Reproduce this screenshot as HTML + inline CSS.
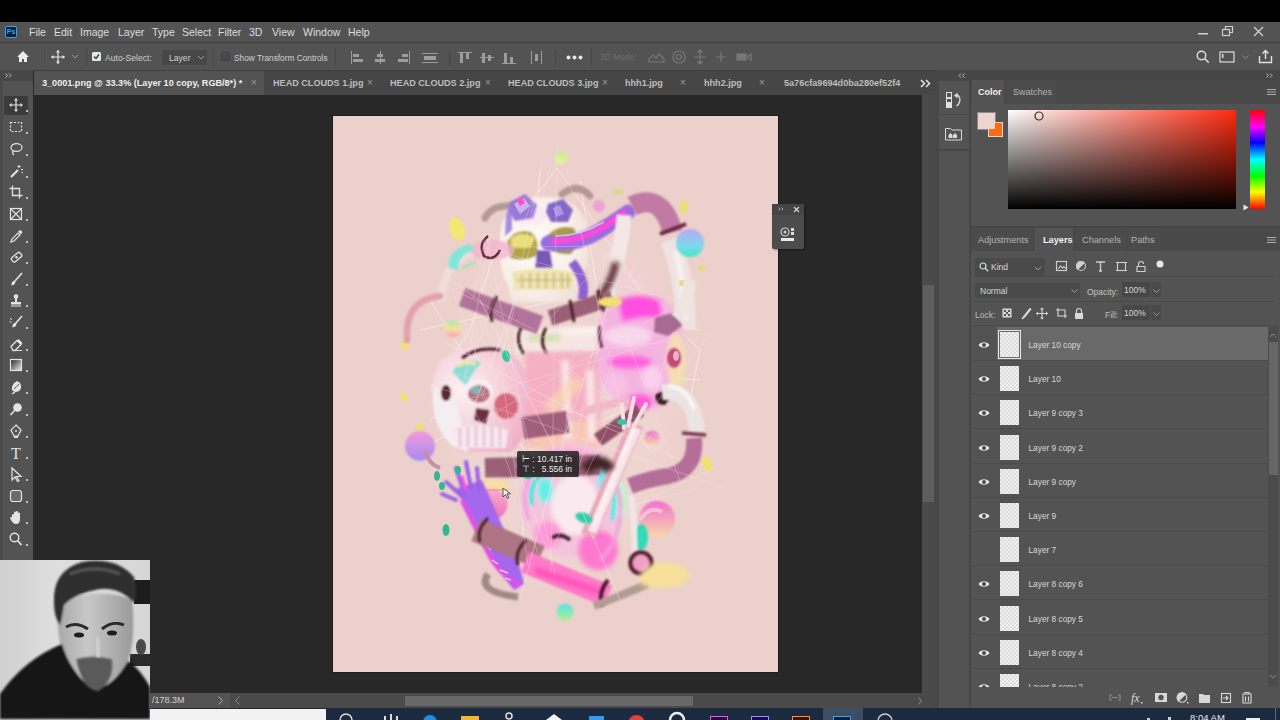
<!DOCTYPE html>
<html><head><meta charset="utf-8">
<style>
*{margin:0;padding:0;box-sizing:border-box}
html,body{width:1280px;height:720px;overflow:hidden;background:#282828;font-family:"Liberation Sans",sans-serif;color:#d8d8d8}
.a{position:absolute}
svg{position:absolute;overflow:visible}
#top{left:0;top:0;width:1280px;height:22px;background:#000}
#menu{left:0;top:22px;width:1280px;height:20px;background:#535353;font-size:10.5px}
#menu span{position:absolute;top:4px;color:#dedede}
#opts{left:0;top:43px;width:1280px;height:27px;background:#535353;font-size:9px;color:#d0d0d0}
#opts .sep{position:absolute;top:5px;width:1px;height:18px;background:#464646}
#tabs{left:34px;top:71px;width:904px;height:24px;background:#464646;font-size:9.1px}
#tabs span{position:absolute;top:7px;color:#bdbdbd;white-space:nowrap;font-weight:bold}
#tabs i{position:absolute;top:6px;font-style:normal;color:#9a9a9a;font-size:10px}
#tool{left:0;top:70px;width:33px;height:638px;background:#535353}
#canvasbg{left:34px;top:95px;width:888px;height:598px;background:#282828}
#art{left:333px;top:116px;width:445px;height:556px;background:#ecd0cb;overflow:hidden;box-shadow:0 0 0 1px #1c1c1c}
#vscroll{left:922px;top:95px;width:14px;height:598px;background:#4a4a4a}
#hscroll{left:34px;top:693px;width:902px;height:15px;background:#535353}
#narrow{left:936px;top:70px;width:34px;height:638px;background:#474747}
#right{left:970px;top:70px;width:310px;height:638px;background:#535353}
#taskbar{left:0;top:708px;width:1280px;height:12px;background:#1c2a40}
#cam{left:0;top:560px;width:150px;height:160px;background:#222;overflow:hidden}
.lay{position:absolute;left:2px;width:296px;height:34px;border-bottom:1px solid #4c4c4c}
.lay .eye{position:absolute;left:6px;top:14px}
.lay .th{position:absolute;left:28px;top:5px;width:19px;height:25px;background-color:#f0f0f0;background-image:linear-gradient(45deg,#dcdcdc 25%,transparent 25%,transparent 75%,#dcdcdc 75%),linear-gradient(45deg,#dcdcdc 25%,transparent 25%,transparent 75%,#dcdcdc 75%);background-size:4px 4px;background-position:0 0,2px 2px}
.lay .nm{position:absolute;left:56.5px;top:13px;font-size:8.3px;color:#d8d8d8;white-space:nowrap}
.lay .vl{position:absolute;left:25px;top:0;width:1px;height:34px;background:#4a4a4a}
</style></head><body>
<div class="a" id="top"></div>
<div class="a" id="menu">
 <div class="a" style="left:5px;top:4px;width:12px;height:12px;background:#001e36;border:1px solid #2fa3f5;border-radius:2px;font-size:7px;font-weight:bold;color:#31a8ff;line-height:10px;text-align:center">Ps</div>
 <span style="left:29px">File</span><span style="left:54px">Edit</span><span style="left:80px">Image</span><span style="left:118px">Layer</span><span style="left:152px">Type</span><span style="left:182px">Select</span><span style="left:218px">Filter</span><span style="left:249px">3D</span><span style="left:272px">View</span><span style="left:303px">Window</span><span style="left:348px">Help</span>
 <svg style="left:1197px;top:6px" width="12" height="10"><rect x="1" y="5" width="10" height="1.5" fill="#cfcfcf"/></svg>
 <svg style="left:1221px;top:3px" width="14" height="12"><rect x="1.5" y="4.5" width="7" height="6" fill="none" stroke="#cfcfcf" stroke-width="1.2"/><path d="M4.5 4.5V1.5h7v6h-3" fill="none" stroke="#cfcfcf" stroke-width="1.2"/></svg>
 <svg style="left:1253px;top:4px" width="11" height="11"><path d="M1 1L10 10M10 1L1 10" stroke="#d0d0d0" stroke-width="1.3"/></svg>
</div>
<div class="a" style="left:0;top:42px;width:1280px;height:1px;background:#3e3e3e"></div>
<div class="a" id="opts">
 <svg style="left:16px;top:7px" width="14" height="13"><path d="M7 1L1 7h2v5h3V9h2v3h3V7h2z" fill="#ededed"/></svg>
 <div class="sep" style="left:44px;background:#4c4c4c"></div>
 <svg style="left:51px;top:7px" width="14" height="14"><path d="M7 0.5v13M0.5 7h13" stroke="#e6e6e6" stroke-width="1.2"/><path d="M7 0L5 2.5h4zM7 14L5 11.5h4zM0 7l2.5-2v4zM14 7l-2.5-2v4z" fill="#e6e6e6"/></svg>
 <svg style="left:71px;top:11px" width="8" height="5"><path d="M1 1l3 3 3-3" stroke="#9a9a9a" fill="none"/></svg>
 <div class="sep" style="left:86px"></div>
 <svg style="left:92px;top:9px" width="9" height="9"><rect x="0" y="0" width="9" height="9" rx="1.5" fill="#e8e8e8"/><path d="M2 4.5l2 2 3-4" stroke="#3a3a3a" stroke-width="1.4" fill="none"/></svg>
 <span class="a" style="left:105px;top:10px;font-size:8.6px">Auto-Select:</span>
 <div class="a" style="left:162px;top:7px;width:45px;height:15px;background:#474747"></div>
 <span class="a" style="left:169px;top:10px;font-size:8.6px">Layer</span>
 <svg style="left:197px;top:12px" width="8" height="5"><path d="M1 1l3 3 3-3" stroke="#9a9a9a" fill="none"/></svg>
 <div class="sep" style="left:213px"></div>
 <svg style="left:221px;top:9px" width="9" height="9"><rect x="0.5" y="0.5" width="8" height="8" rx="1.5" fill="#4a4a4a" stroke="#3e3e3e"/></svg>
 <span class="a" style="left:234px;top:10px;font-size:8.3px">Show Transform Controls</span>
 <div class="sep" style="left:335px"></div>
 <g></g>
 <svg style="left:350px;top:8px" width="260" height="14" fill="#9c9c9c">
  <rect x="1" y="0" width="1" height="13"/><rect x="3" y="3" width="6" height="3"/><rect x="3" y="8" width="10" height="3"/>
  <rect x="30" y="0" width="1" height="13"/><rect x="27" y="3" width="6" height="3"/><rect x="25" y="8" width="10" height="3"/>
  <rect x="59" y="0" width="1" height="13"/><rect x="52" y="3" width="6" height="3"/><rect x="48" y="8" width="10" height="3"/>
  <rect x="72" y="2" width="16" height="1"/><rect x="74" y="5" width="12" height="4"/><rect x="72" y="11" width="16" height="1"/>
  <rect x="99" y="-1" width="1" height="16" fill="#444"/>
  <rect x="108" y="1" width="14" height="1"/><rect x="110" y="2" width="3" height="10"/><rect x="116" y="2" width="3" height="6"/>
  <rect x="130" y="6" width="14" height="1"/><rect x="132" y="2" width="3" height="10"/><rect x="138" y="4" width="3" height="6"/>
  <rect x="152" y="12" width="14" height="1"/><rect x="154" y="2" width="3" height="10"/><rect x="160" y="6" width="3" height="6"/>
  <rect x="181" y="0" width="1" height="13"/><rect x="191" y="0" width="1" height="13"/><rect x="185" y="3" width="3" height="7"/>
  <rect x="205" y="-1" width="1" height="16" fill="#444"/>
 </svg>
 <svg style="left:566px;top:12px" width="18" height="5"><circle cx="2.5" cy="2.5" r="2" fill="#e6e6e6"/><circle cx="8.5" cy="2.5" r="2" fill="#e6e6e6"/><circle cx="14.5" cy="2.5" r="2" fill="#e6e6e6"/></svg>
 <div class="sep" style="left:591px"></div>
 <span class="a" style="left:600px;top:9px;color:#6e6e6e;font-size:8.5px">3D Mode:</span>
 <svg style="left:647px;top:6px" width="110" height="16" fill="none" stroke="#777" stroke-width="1.2">
  <path d="M2 10l4-4 3 3 3-4 5 5v3H2z"/><circle cx="32" cy="8" r="6"/><circle cx="32" cy="8" r="2.5"/>
  <path d="M53 2v12M47 8h12M53 1l-2 2h4zM53 15l-2-2h4z"/><path d="M74 3v10M69 8h10"/><rect x="90" y="5" width="9" height="6" fill="#777"/><path d="M100 8l4-3v6z"/>
 </svg>
 <svg style="left:1196px;top:7px" width="14" height="14"><circle cx="5.5" cy="5.5" r="4.3" fill="none" stroke="#e0e0e0" stroke-width="1.4"/><path d="M8.8 8.8l4 4" stroke="#e0e0e0" stroke-width="1.6"/></svg>
 <svg style="left:1219px;top:8px" width="16" height="12"><rect x="1" y="1" width="14" height="10" fill="none" stroke="#dcdcdc" stroke-width="1.2"/><rect x="3" y="3" width="1.5" height="4" fill="#dcdcdc"/></svg>
 <svg style="left:1242px;top:12px" width="7" height="4"><path d="M0.5 0.5l3 3 3-3" stroke="#8c8c8c" fill="none"/></svg>
 <svg style="left:1258px;top:6px" width="15" height="15"><path d="M1.5 7v6.5h12V7" fill="none" stroke="#e0e0e0" stroke-width="1.4"/><path d="M7.5 10V2M4.5 4.5l3-3 3 3" fill="none" stroke="#e0e0e0" stroke-width="1.4"/></svg>
</div>
<div class="a" style="left:0;top:70px;width:1280px;height:1px;background:#3e3e3e"></div>
<div class="a" id="canvasbg"></div>
<div class="a" id="tabs">
 <div class="a" style="left:0;top:0;width:230px;height:24px;background:#535353"></div>
 <span style="left:8px;color:#efefef">3_0001.png @ 33.3% (Layer 10 copy, RGB/8*) *</span><i style="left:217px">×</i>
 <span style="left:239px">HEAD CLOUDS 1.jpg</span><i style="left:333px">×</i>
 <span style="left:356px">HEAD CLOUDS 2.jpg</span><i style="left:451px">×</i>
 <span style="left:474px">HEAD CLOUDS 3.jpg</span><i style="left:568px">×</i>
 <span style="left:591px">hhh1.jpg</span><i style="left:646px">×</i>
 <span style="left:670px">hhh2.jpg</span><i style="left:725px">×</i>
 <span style="left:750px">5a76cfa9694d0ba280ef52f4</span>
 <svg style="left:886px;top:8px" width="12" height="9"><path d="M1 1l3.5 3.5L1 8M6 1l3.5 3.5L6 8" stroke="#e6e6e6" stroke-width="1.5" fill="none"/></svg>
</div>
<div class="a" id="tool">
 <div class="a" style="left:0;top:0;width:33px;height:11px;background:#474747"></div>
 <svg style="left:5px;top:3px" width="8" height="5"><path d="M0.5 0.5l2 2-2 2M4 0.5l2 2-2 2" stroke="#bbb" fill="none"/></svg>
 <div class="a" style="left:0;top:11px;width:3px;height:627px;background:#4a4a4a"></div>
 <div class="a" style="left:4px;top:26px;width:24px;height:19px;background:#3b3b3b"></div>
 <svg style="left:9px;top:28px" width="15" height="15"><path d="M7 1v12M1 7h12" stroke="#e4e4e4" stroke-width="1.2"/><path d="M7 0L5 2.5h4zM7 14L5 11.5h4zM0 7l2.5-2v4zM14 7l-2.5-2v4z" fill="#e4e4e4"/></svg>
 <div class="a" style="left:26px;top:40px;width:2px;height:2px;background:#bdbdbd"></div>
 <svg style="left:9px;top:50px" width="15" height="15"><rect x="1.5" y="2.5" width="11" height="9" fill="none" stroke="#e4e4e4" stroke-width="1.2" stroke-dasharray="2 1.5"/></svg>
 <div class="a" style="left:26px;top:62px;width:2px;height:2px;background:#bdbdbd"></div>
 <svg style="left:9px;top:72px" width="15" height="15"><ellipse cx="7.5" cy="5.5" rx="5.5" ry="3.8" fill="none" stroke="#e4e4e4" stroke-width="1.2"/><path d="M4 8.5Q3 12 5 13" fill="none" stroke="#e4e4e4" stroke-width="1.2"/></svg>
 <div class="a" style="left:26px;top:84px;width:2px;height:2px;background:#bdbdbd"></div>
 <svg style="left:9px;top:94px" width="15" height="15"><path d="M2 13L9 6" stroke="#e4e4e4" stroke-width="2.2"/><path d="M10 1v3M8.5 2.5h3M12 5.5h2M12.5 8l1.5 1" stroke="#e4e4e4" stroke-width="1"/></svg>
 <div class="a" style="left:26px;top:106px;width:2px;height:2px;background:#bdbdbd"></div>
 <svg style="left:9px;top:115px" width="15" height="15"><path d="M3.5 0.5v10h10M0.5 3.5h10v10" fill="none" stroke="#e4e4e4" stroke-width="1.3"/></svg>
 <div class="a" style="left:26px;top:127px;width:2px;height:2px;background:#bdbdbd"></div>
 <svg style="left:9px;top:137px" width="15" height="15"><rect x="1.5" y="1.5" width="11" height="11" fill="none" stroke="#e4e4e4" stroke-width="1.2"/><path d="M1.5 1.5l11 11M12.5 1.5l-11 11" stroke="#e4e4e4" stroke-width="1.1"/></svg>
 <div class="a" style="left:26px;top:149px;width:2px;height:2px;background:#bdbdbd"></div>
 <svg style="left:9px;top:159px" width="15" height="15"><path d="M2 13l1-3 6-6 2 2-6 6z" fill="none" stroke="#e4e4e4" stroke-width="1.2"/><path d="M9 2.5l2.5-1.5 2 2L12 5.5z" fill="#e4e4e4"/></svg>
 <div class="a" style="left:26px;top:171px;width:2px;height:2px;background:#bdbdbd"></div>
 <svg style="left:9px;top:180px" width="15" height="15"><rect x="2" y="4.5" width="11" height="5.5" rx="2" transform="rotate(-40 7.5 7.2)" fill="none" stroke="#e4e4e4" stroke-width="1.3"/><circle cx="7.5" cy="7.2" r="1.2" fill="#e4e4e4"/></svg>
 <div class="a" style="left:26px;top:192px;width:2px;height:2px;background:#bdbdbd"></div>
 <svg style="left:9px;top:202px" width="15" height="15"><path d="M13 1L6 9" stroke="#e4e4e4" stroke-width="1.6"/><path d="M6 8.5Q2 9 2.5 13.5Q6 13 6.5 10z" fill="#e4e4e4"/></svg>
 <div class="a" style="left:26px;top:214px;width:2px;height:2px;background:#bdbdbd"></div>
 <svg style="left:9px;top:223px" width="15" height="15"><circle cx="7" cy="3.5" r="2.3" fill="#e4e4e4"/><rect x="6" y="5" width="2" height="4" fill="#e4e4e4"/><rect x="2" y="9" width="10" height="2.5" fill="#e4e4e4"/><rect x="2" y="12.5" width="10" height="1" fill="#e4e4e4"/></svg>
 <div class="a" style="left:26px;top:235px;width:2px;height:2px;background:#bdbdbd"></div>
 <svg style="left:9px;top:245px" width="15" height="15"><path d="M13 1L7 8" stroke="#e4e4e4" stroke-width="1.6"/><path d="M7 7.5Q3 8 3.5 12.5Q7 12 7.5 9z" fill="#e4e4e4"/><path d="M1 3l2 2M0.5 7h2" stroke="#e4e4e4" stroke-width="1"/></svg>
 <div class="a" style="left:26px;top:257px;width:2px;height:2px;background:#bdbdbd"></div>
 <svg style="left:9px;top:267px" width="15" height="15"><path d="M2 9.5l6-6 4 4-6 6H4z" fill="none" stroke="#e4e4e4" stroke-width="1.3"/><path d="M8 3.5l4 4 1.5-1.5-4-4z" fill="#e4e4e4"/><path d="M6 13.5h7" stroke="#e4e4e4"/></svg>
 <div class="a" style="left:26px;top:279px;width:2px;height:2px;background:#bdbdbd"></div>
 <svg style="left:9px;top:288px" width="15" height="15"><defs><linearGradient id="tg" x1="0" y1="0" x2="1" y2="1"><stop offset="0" stop-color="#222"/><stop offset="1" stop-color="#eee"/></linearGradient></defs><rect x="1.5" y="1.5" width="11" height="11" fill="url(#tg)" stroke="#e4e4e4" stroke-width="1.2"/></svg>
 <div class="a" style="left:26px;top:300px;width:2px;height:2px;background:#bdbdbd"></div>
 <svg style="left:9px;top:310px" width="15" height="15"><path d="M8 1Q13 3 12 8Q11 12 6 12Q2 11 3 7Q4 3 8 1z" fill="#e4e4e4"/><path d="M6 12L3 14" stroke="#e4e4e4" stroke-width="1.3"/><path d="M5 9Q8 6 10 4" stroke="#535353" stroke-width="1"/></svg>
 <div class="a" style="left:26px;top:322px;width:2px;height:2px;background:#bdbdbd"></div>
 <svg style="left:9px;top:332px" width="15" height="15"><circle cx="8.5" cy="5.5" r="4.3" fill="#e4e4e4"/><path d="M5.5 8.5L1.5 13" stroke="#e4e4e4" stroke-width="1.6"/></svg>
 <div class="a" style="left:26px;top:344px;width:2px;height:2px;background:#bdbdbd"></div>
 <svg style="left:9px;top:354px" width="15" height="15"><path d="M7 1l5 5-3 6H5L2 6z" fill="none" stroke="#e4e4e4" stroke-width="1.2"/><circle cx="7" cy="7" r="1" fill="#e4e4e4"/><path d="M5 12h4v2H5z" fill="#e4e4e4"/></svg>
 <div class="a" style="left:26px;top:366px;width:2px;height:2px;background:#bdbdbd"></div>
 <svg style="left:9px;top:375px" width="15" height="15"><text x="7" y="13.5" text-anchor="middle" font-family="Liberation Serif" font-size="16" fill="#e4e4e4">T</text></svg>
 <div class="a" style="left:26px;top:387px;width:2px;height:2px;background:#bdbdbd"></div>
 <svg style="left:9px;top:397px" width="15" height="15"><path d="M3 1v12l3-3 2.5 4.5 1.5-0.8L7.5 9.5H12z" fill="none" stroke="#e4e4e4" stroke-width="1.2"/></svg>
 <div class="a" style="left:26px;top:409px;width:2px;height:2px;background:#bdbdbd"></div>
 <svg style="left:9px;top:419px" width="15" height="15"><rect x="1.5" y="1.5" width="11" height="11" rx="2.5" fill="#6a6a6a" stroke="#e4e4e4" stroke-width="1.2"/></svg>
 <div class="a" style="left:26px;top:431px;width:2px;height:2px;background:#bdbdbd"></div>
 <svg style="left:9px;top:440px" width="15" height="15"><path d="M3 8V5a1 1 0 0 1 2 0v2V2.5a1 1 0 0 1 2 0V7V2a1 1 0 0 1 2 0v5V3.5a1 1 0 0 1 2 0V9Q11 14 7 14Q4 14 2 10L1 8a1 1 0 0 1 2 0z" fill="#e4e4e4"/></svg>
 <div class="a" style="left:26px;top:452px;width:2px;height:2px;background:#bdbdbd"></div>
 <svg style="left:9px;top:462px" width="15" height="15"><circle cx="5.5" cy="5.5" r="4.3" fill="none" stroke="#e4e4e4" stroke-width="1.4"/><path d="M8.5 8.5L12.5 13" stroke="#e4e4e4" stroke-width="1.8"/></svg>
 <div class="a" style="left:26px;top:474px;width:2px;height:2px;background:#bdbdbd"></div>
</div>
<div class="a" id="art">
<svg style="left:0;top:0" width="445" height="556" viewBox="333 116 445 556">
<defs>
 <filter id="b1" filterUnits="userSpaceOnUse" x="333" y="116" width="445" height="556"><feGaussianBlur stdDeviation="0.8"/></filter>
 <filter id="b2" filterUnits="userSpaceOnUse" x="333" y="116" width="445" height="556"><feGaussianBlur stdDeviation="2.5"/></filter>
 <filter id="b4" filterUnits="userSpaceOnUse" x="333" y="116" width="445" height="556"><feGaussianBlur stdDeviation="8"/></filter>
 <linearGradient id="gGreen" x1="0" y1="0" x2="0" y2="1"><stop offset="0" stop-color="#c0f090"/><stop offset="1" stop-color="#f0f0a0"/></linearGradient>
 <linearGradient id="gBlue" x1="0" y1="0" x2="0" y2="1"><stop offset="0" stop-color="#b8a8f0"/><stop offset="0.6" stop-color="#80d8f0"/><stop offset="1" stop-color="#40e8c0"/></linearGradient>
 <linearGradient id="gLav" x1="0" y1="0" x2="0" y2="1"><stop offset="0" stop-color="#f49ad8"/><stop offset="1" stop-color="#a48cf8"/></linearGradient>
 <linearGradient id="gPeach" x1="0" y1="0" x2="0" y2="1"><stop offset="0" stop-color="#f070d0"/><stop offset="1" stop-color="#f8d8a8"/></linearGradient>
 <linearGradient id="gPk" x1="0" y1="0" x2="0" y2="1"><stop offset="0" stop-color="#f8b0c8"/><stop offset="1" stop-color="#f070c0"/></linearGradient>
 <linearGradient id="gMint" x1="0" y1="0" x2="0" y2="1"><stop offset="0" stop-color="#60e0e8"/><stop offset="1" stop-color="#a8f090"/></linearGradient>
 <linearGradient id="gRain" x1="0" y1="0" x2="0" y2="1"><stop offset="0" stop-color="#a8e8a0"/><stop offset="0.5" stop-color="#f8e0a0"/><stop offset="1" stop-color="#f8a0b8"/></linearGradient>
 <radialGradient id="gSkull" cx="0.4" cy="0.45" r="0.65"><stop offset="0" stop-color="#fffcf8"/><stop offset="0.7" stop-color="#f8f0e8"/><stop offset="1" stop-color="#efe0d8"/></radialGradient>
 <radialGradient id="gPinkSkull" cx="0.3" cy="0.4" r="0.75"><stop offset="0" stop-color="#fdf0f4"/><stop offset="0.5" stop-color="#f6d4de"/><stop offset="1" stop-color="#f0b0c8"/></radialGradient>
</defs>
<rect x="333" y="116" width="445" height="556" fill="#ecd0cb"/>
<!-- soft glow of cluster -->
<ellipse cx="560" cy="400" rx="110" ry="185" fill="#f2dcd8" filter="url(#b4)" opacity="0.45"/>
<!-- thin white web lines (back) -->
<g stroke="#fbeeea" stroke-width="1" opacity="0.75" fill="none">
 <path d="M557 168L495 250L470 330L430 390"/><path d="M557 168L600 230L640 290L700 350L690 400"/>
 <path d="M420 330L560 300L700 330"/><path d="M430 420L560 330L650 450"/>
 <path d="M540 170L530 300"/><path d="M580 180L600 310"/><path d="M430 300L530 460L520 560"/>
 <path d="M440 360L700 380"/><path d="M460 480L650 400"/><path d="M420 450L600 350"/>
</g>
<!-- top green dot -->
<circle cx="561" cy="158" r="6.5" fill="url(#gGreen)" filter="url(#b1)"/>
<!-- horns -->
<path d="M485 218Q492 204 514 206" stroke="#b49a96" stroke-width="7" fill="none" stroke-linecap="round" filter="url(#b1)"/>
<path d="M562 194Q578 182 590 196" stroke="#b49a96" stroke-width="7" fill="none" stroke-linecap="round" filter="url(#b1)"/>
<!-- top skull -->
<g filter="url(#b1)">
<path d="M500 240Q500 198 545 197Q590 198 588 242Q590 270 578 284L576 302L512 302L508 286Q498 268 500 240z" fill="url(#gSkull)"/>
<path d="M507 242Q515 228 531 232Q541 240 536 256Q524 262 510 258z" fill="#b2a44c"/>
<path d="M511 238Q522 230 535 238L531 247Q520 249 511 247z" fill="#eade78"/>
<path d="M547 236Q557 224 574 228Q581 242 571 254Q556 256 547 246z" fill="#a89a48"/>
<path d="M537 250L550 250L553 268L535 268z" fill="#7a58b8"/>
<path d="M512 272Q540 266 574 272L572 290L514 290z" fill="#efe4b0"/>
<path d="M516 280h56M522 274v14M530 273v15M538 273v15M546 273v15M554 273v15M562 273v15M568 274v14" stroke="#b8a868" stroke-width="1.2"/>
<ellipse cx="530" cy="215" rx="18" ry="10" fill="#fae8f4" opacity="0.8"/>
</g>
<!-- purple crystals -->
<path d="M510 202L525 194L537 205L533 218L515 221L508 211z" fill="#9a7ad8" filter="url(#b1)"/><path d="M514 204L524 198L530 206L520 214z" fill="#e8d8f8" opacity="0.6"/>
<path d="M517 200l5 -3l3 6l-5 3z" fill="#ff50d0"/>
<path d="M548 204L563 199L573 210L568 222L551 222L546 212z" fill="#8468c8" filter="url(#b1)"/><path d="M553 208L560 205L564 214L556 217z" fill="#c0a8f0" opacity="0.7"/>
<path d="M506 214L512 206L512 230L505 236z" fill="#9c78e0" filter="url(#b1)" opacity="0.85"/>
<!-- purple magenta ribbon -->
<path d="M548 243Q575 246 598 232Q614 222 628 212" stroke="#9a6ce0" stroke-width="15" fill="none" stroke-linecap="round" filter="url(#b1)"/>
<path d="M552 241Q578 242 602 228Q614 220 626 212" stroke="#ff48d8" stroke-width="6" fill="none" filter="url(#b1)"/>
<path d="M556 236Q580 236 604 222" stroke="#e8d8f8" stroke-width="1.5" fill="none" opacity="0.7"/>
<path d="M572 262Q588 282 582 300" stroke="#8e60d0" stroke-width="9" fill="none" filter="url(#b1)"/>
<!-- translucent white loop left -->
<path d="M442 302Q440 264 480 248Q500 240 505 255" stroke="#f6ecec" stroke-width="8" fill="none" opacity="0.45" filter="url(#b1)"/>
<!-- left loop ring -->
<ellipse cx="492" cy="250" rx="22" ry="10" fill="#f2b0cc" opacity="0.75" filter="url(#b1)"/>
<path d="M488 236Q478 244 484 256Q494 262 500 250" stroke="#5e2a3a" stroke-width="2.5" fill="none"/>
<!-- cyan half ball + yellow leaf left -->
<ellipse cx="457" cy="229" rx="7" ry="12" fill="#f2ea70" transform="rotate(-18 457 229)" filter="url(#b1)"/>
<path d="M449 268Q446 250 470 244L474 250Q458 254 458 270z" fill="#80e8d8" filter="url(#b1)"/><path d="M462 268L476 262" stroke="#90e8c8" stroke-width="3" opacity="0.6"/>
<!-- pink tube top right (elbow) -->
<path d="M632 206Q652 196 664 212Q670 220 672 232" stroke="#c07aa4" stroke-width="20" fill="none" filter="url(#b1)"/>
<path d="M660 234L686 224" stroke="#6a2840" stroke-width="4" fill="none" filter="url(#b1)"/>
<!-- white tubes -->
<path d="M624 215Q622 250 606 296" stroke="#f3e8e6" stroke-width="15" fill="none" filter="url(#b1)"/>
<path d="M616 262Q612 282 598 300" stroke="#6a3840" stroke-width="8" fill="none" filter="url(#b2)"/>
<path d="M670 240Q686 280 686 330" stroke="#efe6e4" stroke-width="20" fill="none" filter="url(#b1)" opacity="0.9"/><path d="M676 250Q684 280 684 320" stroke="#faf6f4" stroke-width="5" fill="none" filter="url(#b2)"/>
<!-- blue ball -->
<circle cx="690" cy="243" r="14" fill="url(#gBlue)" filter="url(#b1)"/>
<!-- small dots/leaves -->
<ellipse cx="684" cy="207" rx="4" ry="7" fill="#e8e070" filter="url(#b1)"/>
<ellipse cx="618" cy="192" rx="6" ry="3" fill="#e0d890"/>
<circle cx="599" cy="206" r="6" fill="#f0a0d8" filter="url(#b1)"/>
<ellipse cx="702" cy="268" rx="4" ry="3" fill="#e8d888"/>
<ellipse cx="682" cy="283" rx="3" ry="3" fill="#e8d888"/>
<ellipse cx="405" cy="344" rx="3.5" ry="6" fill="#f0e070"/>
<ellipse cx="404" cy="397" rx="3" ry="5" fill="#f0e070" transform="rotate(-30 404 397)"/><ellipse cx="420" cy="427" rx="4" ry="3" fill="#f0e070"/>
<ellipse cx="707" cy="464" rx="4.5" ry="8" fill="#f0e070" transform="rotate(-20 707 464)"/>

<!-- left pink hook -->
<path d="M407 340Q404 300 440 296" stroke="#e4a0b0" stroke-width="6.5" fill="none" stroke-linecap="round" filter="url(#b1)"/>
<!-- yellow green ball -->
<circle cx="453" cy="329" r="8.5" fill="url(#gRain)" filter="url(#b1)"/>
<!-- upper dark tube behind skull -->
<path d="M550 318L612 298" stroke="#9a6078" stroke-width="16" fill="none" filter="url(#b1)"/>
<path d="M570 300L574 322M598 290L604 312" stroke="#4a2028" stroke-width="3" fill="none" filter="url(#b1)"/>
<!-- light tube -->
<path d="M515 342L640 336" stroke="#f6e6e2" stroke-width="24" fill="none" filter="url(#b1)"/><path d="M560 332L640 330" stroke="#fbf2ee" stroke-width="6" fill="none" filter="url(#b2)"/>
<path d="M528 338L560 338" stroke="#c8e0a8" stroke-width="6" fill="none" filter="url(#b2)"/>
<path d="M522 326Q514 340 524 354M546 328Q538 342 548 356" stroke="#4a2028" stroke-width="3" fill="none" filter="url(#b1)"/>
<!-- mauve tube -->
<path d="M462 297L540 325" stroke="#b2739a" stroke-width="19" fill="none" filter="url(#b1)"/>
<path d="M497 296Q488 310 492 322" stroke="#4a2028" stroke-width="3" fill="none" filter="url(#b1)"/>
<g stroke="#f8c8dc" stroke-width="2.5" stroke-linecap="round" opacity="0.8" filter="url(#b1)">
<path d="M625 292L660 272M628 295L665 285M622 290L645 265M630 298L660 300M620 288L632 262"/></g>
<!-- central peach column -->
<path d="M525 352L600 352L600 445L525 445z" fill="#f5b0c4" filter="url(#b2)"/><path d="M530 420L598 420L598 448L530 448z" fill="#f8c8b4" filter="url(#b2)"/>
<path d="M565 360L568 440M590 370L592 440" stroke="#fbeaea" stroke-width="7" filter="url(#b2)"/>
<path d="M548 410L580 380" stroke="#f8d8b0" stroke-width="14" filter="url(#b2)" opacity="0.7"/>
<!-- right face (magenta) -->
<g filter="url(#b2)">
<path d="M600 318Q616 294 660 297Q688 314 684 360Q680 400 652 410Q615 408 602 384Q594 352 600 318z" fill="#f4b4e0"/>
<ellipse cx="676" cy="362" rx="9" ry="30" fill="#f6e4a8" opacity="0.85"/>
<path d="M618 300Q640 292 660 300L662 318Q640 316 622 322z" fill="#ff4ee0"/>
<ellipse cx="628" cy="336" rx="24" ry="10" fill="#f8d8ec"/>
<ellipse cx="630" cy="362" rx="22" ry="7" fill="#ff60e0"/>
<ellipse cx="616" cy="385" rx="12" ry="12" fill="#f8c0e4"/>
<ellipse cx="640" cy="402" rx="14" ry="8" fill="#ff58d8"/>
<ellipse cx="652" cy="378" rx="10" ry="12" fill="#fbd0ee"/>
</g>
<path d="M600 326Q598 336 602 348" stroke="#5a2838" stroke-width="2.5" fill="none" filter="url(#b1)"/>
<ellipse cx="610" cy="302" rx="12" ry="5" fill="#f0e070" filter="url(#b1)"/>
<ellipse cx="674" cy="358" rx="7" ry="10" fill="#c04878" filter="url(#b1)"/><ellipse cx="676" cy="356" rx="3" ry="5" fill="#f0b0c8"/>
<path d="M655 318L675 312L682 326L668 336L654 332z" fill="#a86a90" filter="url(#b1)"/>
<path d="M676 318Q690 300 690 280" stroke="#eee4e0" stroke-width="12" fill="none" filter="url(#b1)"/>
<path d="M655 395Q665 388 672 395L665 405Q655 405 655 395z" fill="#3a1c24" filter="url(#b1)"/>
<!-- middle pink skull -->
<g filter="url(#b1)">
<path d="M433 400Q426 352 476 346Q524 344 529 388Q533 420 520 442L512 452L462 452Q436 442 433 400z" fill="url(#gPinkSkull)"/>
<path d="M434 385Q428 422 452 446L468 452L456 400z" fill="#f4eef0"/>
<path d="M452 372Q462 356 482 362Q474 370 466 386z" fill="#70dcd0" opacity="0.8"/>
<path d="M458 366Q466 360 476 364" stroke="#f8e890" stroke-width="3" fill="none"/>
<ellipse cx="478" cy="392" rx="15" ry="13" fill="#fbeef2"/>
<ellipse cx="479" cy="394" rx="11" ry="9" fill="#b87080"/>
<ellipse cx="476" cy="390" rx="5" ry="4" fill="#60d8d0" opacity="0.7"/>
<ellipse cx="506" cy="406" rx="12" ry="13" fill="#d46a7c"/>
<ellipse cx="446" cy="393" rx="5" ry="8" fill="#5a2838"/>
<path d="M476 408L490 410L486 424L474 420z" fill="#6a3040"/>
<path d="M452 428Q480 422 508 430L506 448L456 448z" fill="#f8e6ee"/>
<path d="M460 428v19M468 427v20M476 426v21M484 426v21M492 427v20M500 428v19" stroke="#c898a8" stroke-width="1"/>
</g>
<path d="M462 358Q478 346 500 350" stroke="#4a2028" stroke-width="3" fill="none" filter="url(#b1)"/>
<ellipse cx="506" cy="356" rx="4" ry="6" fill="#30c8a0" transform="rotate(-20 506 356)"/>
<!-- mauve tube right of skull -->
<path d="M523 428L568 422" stroke="#a0607c" stroke-width="22" fill="none" filter="url(#b1)"/>
<path d="M568 418Q600 405 630 400" stroke="#f0b8c8" stroke-width="8" fill="none" filter="url(#b1)"/>
<path d="M598 440L640 410" stroke="#8e5068" stroke-width="14" fill="none" filter="url(#b1)"/>
<!-- right mauve tube curving -->
<path d="M694 438Q697 470 668 476Q648 479 630 486" stroke="#b46e98" stroke-width="16" fill="none" filter="url(#b1)"/>
<path d="M662 392Q694 390 697 432" stroke="#ece4e2" stroke-width="16" fill="none" filter="url(#b1)"/><path d="M668 386Q688 388 694 410" stroke="#faf6f6" stroke-width="4" fill="none" filter="url(#b1)"/>
<path d="M682 433L706 435" stroke="#7a3850" stroke-width="3.5" filter="url(#b1)"/>
<circle cx="652" cy="438" r="7.5" fill="url(#gPeach)" filter="url(#b1)"/>
<!-- left lavender ball -->
<circle cx="420" cy="446" r="15" fill="url(#gLav)" filter="url(#b1)"/>
<path d="M425 450Q428 464 440 468" stroke="#c890a8" stroke-width="4" fill="none"/>
<!-- iridescent glass lower center -->
<g filter="url(#b2)">
<ellipse cx="572" cy="500" rx="52" ry="58" fill="#f4c4dc"/>
<ellipse cx="545" cy="490" rx="8" ry="13" fill="#60f0e8"/>
<ellipse cx="603" cy="478" rx="6" ry="14" fill="#80e8f0"/>
<ellipse cx="575" cy="505" rx="24" ry="30" fill="#faeaf0"/>
<ellipse cx="565" cy="458" rx="28" ry="9" fill="#ffa0d0"/>
<ellipse cx="598" cy="550" rx="20" ry="20" fill="#ff78d0"/>
<ellipse cx="548" cy="535" rx="14" ry="14" fill="#ff98d8"/>
<ellipse cx="620" cy="500" rx="8" ry="18" fill="#c8f0d0"/>
</g>
<path d="M528 520Q515 470 560 455Q610 450 620 500Q622 540 600 560" stroke="#f0a0e0" stroke-width="5" fill="none" opacity="0.7" filter="url(#b1)"/><path d="M532 505Q528 480 548 470" stroke="#50e8e0" stroke-width="4" fill="none" filter="url(#b1)"/><path d="M606 470Q618 490 612 520" stroke="#60e8e8" stroke-width="4" fill="none" filter="url(#b1)"/>
<path d="M552 538Q560 532 570 540" stroke="#402830" stroke-width="4" fill="none" filter="url(#b1)"/>
<!-- white arm diagonal -->
<path d="M588 536Q612 480 636 424" stroke="#e8a8bc" stroke-width="15" fill="none" filter="url(#b1)"/><path d="M592 532Q614 480 637 428" stroke="#fae4ea" stroke-width="9" fill="none" filter="url(#b1)"/>
<path d="M594 524Q614 476 634 428" stroke="#fdf0f2" stroke-width="4" fill="none" filter="url(#b1)"/><ellipse cx="584" cy="518" rx="9" ry="5" fill="#30d0a8" transform="rotate(20 584 518)" filter="url(#b1)"/>
<path d="M628 426L634 398M634 426L646 404M624 428L622 404" stroke="#f8dce2" stroke-width="4" fill="none" stroke-linecap="round"/>
<!-- dark mauve tube under tooltip -->
<path d="M485 468L600 465" stroke="#9a6078" stroke-width="20" fill="none" filter="url(#b1)"/>
<path d="M585 470Q600 455 610 470" stroke="#402020" stroke-width="12" fill="none" filter="url(#b2)"/>
<ellipse cx="500" cy="358" rx="0" ry="0"/>
<!-- peach yellow near cursor -->
<ellipse cx="490" cy="488" rx="20" ry="9" fill="#f8e0a0" filter="url(#b2)"/>
<circle cx="492" cy="504" r="15.5" fill="url(#gPk)" filter="url(#b1)"/>
<path d="M474 490L508 490" stroke="#f080b0" stroke-width="1"/>
<!-- purple arm -->
<g filter="url(#b1)">
<path d="M452 490Q466 500 474 524Q486 552 496 568L514 590L524 584Q520 560 504 530Q492 502 482 480z" fill="#a468ec"/>
<path d="M462 500Q476 528 490 556Q500 574 520 586" stroke="#e050e8" stroke-width="5" fill="none"/>
<path d="M456 468l8 24M466 462l5 26M446 482l16 14M477 468l2 22M442 494l14 6" stroke="#9c60e8" stroke-width="4" stroke-linecap="round"/>
<path d="M462 476l4 14" stroke="#ff50e0" stroke-width="3"/>
</g>
<g stroke="#f0e4fc" stroke-width="1.5" opacity="0.8"><path d="M492 560l6 4M500 570l8 3M486 545l5 5M505 578l6 2"/></g>
<!-- lower mauve tube -->
<path d="M476 530L540 557" stroke="#ae7484" stroke-width="24" fill="none" filter="url(#b1)"/>
<path d="M488 518Q476 530 480 542M526 540Q514 552 518 565" stroke="#4a2028" stroke-width="3" fill="none" filter="url(#b1)"/>
<!-- lower hot pink tube -->
<path d="M525 562L608 596" stroke="#ff7ac8" stroke-width="22" fill="none" filter="url(#b1)"/>
<path d="M535 570L600 592" stroke="#ff4cb8" stroke-width="6" fill="none" filter="url(#b2)"/>
<path d="M608 580Q598 592 602 606" stroke="#4a1828" stroke-width="4" fill="none" filter="url(#b1)"/>
<!-- gray ribbons -->
<path d="M488 574Q476 592 518 597" stroke="#a08a84" stroke-width="7" fill="none" filter="url(#b1)"/>
<path d="M594 606Q620 596 648 584" stroke="#b49c96" stroke-width="8" fill="none" filter="url(#b1)"/>
<!-- green ball bottom -->
<circle cx="565" cy="612" r="8.5" fill="url(#gMint)" filter="url(#b1)"/>
<!-- right gradient ball -->
<circle cx="657" cy="519" r="18" fill="url(#gPeach)" filter="url(#b1)"/>
<path d="M640 520Q650 505 662 512" stroke="#f8d0e0" stroke-width="4" fill="none" opacity="0.7"/>
<ellipse cx="641" cy="537" rx="7" ry="13" fill="#30dab8" filter="url(#b1)"/>
<!-- dark ring -->
<path d="M631 495Q636 530 634 560" stroke="#f2e6e6" stroke-width="6" fill="none" filter="url(#b1)"/><circle cx="641" cy="563" r="10.5" fill="#f0a0c8" stroke="#5a2030" stroke-width="4.5" filter="url(#b1)"/>
<!-- yellow cloud -->
<path d="M640 574Q650 560 668 563Q690 566 690 576Q682 590 654 588Q636 586 640 574z" fill="#f6e09a" filter="url(#b2)"/>
<!-- teal leaves -->
<ellipse cx="437" cy="476" rx="3" ry="5" fill="#30b890"/>
<ellipse cx="442" cy="486" rx="3" ry="4" fill="#30b890"/>
<ellipse cx="446" cy="530" rx="3.5" ry="6" fill="#30b890"/>
<ellipse cx="458" cy="470" rx="3" ry="4" fill="#30b890"/>
<ellipse cx="528" cy="476" rx="5" ry="3" fill="#30c8a0"/>
<ellipse cx="622" cy="422" rx="5" ry="3" fill="#30c8a0"/>
<!-- front web lines -->
<g stroke="#fce8ec" stroke-width="1" opacity="0.3" fill="none"><path d="M560 476L578 319"/><path d="M486 248L702 308"/><path d="M667 310L482 421"/><path d="M500 340L482 398"/><path d="M487 239L555 575"/><path d="M551 572L557 146"/><path d="M490 403L550 169"/><path d="M582 351L684 340"/><path d="M491 231L462 391"/><path d="M448 361L490 440"/><path d="M498 344L528 566"/><path d="M452 404L685 334"/><path d="M538 554L460 325"/><path d="M624 330L680 481"/><path d="M646 416L711 333"/><path d="M619 402L547 561"/><path d="M596 324L606 251"/><path d="M536 191L460 391"/><path d="M595 246L524 247"/><path d="M552 564L449 280"/><path d="M659 437L449 278"/><path d="M651 438L453 373"/><path d="M717 467L596 524"/><path d="M574 442L606 318"/><path d="M473 403L622 240"/><path d="M485 235L473 300"/><path d="M673 332L650 412"/><path d="M697 488L619 509"/><path d="M586 324L509 347"/><path d="M486 432L543 159"/><path d="M624 421L566 166"/><path d="M579 467L614 356"/><path d="M428 384L724 488"/><path d="M600 250L690 330"/><path d="M535 330L448 287"/></g>

<g stroke="#fce8ec" stroke-width="1" opacity="0.45" fill="none">
 <path d="M480 300L560 460L620 600"/><path d="M520 290L460 440"/><path d="M610 300L560 450L520 600"/>
 <path d="M440 340L590 420L680 460"/>
</g>
</svg>
<div class="a" style="left:184px;top:335px;width:62px;height:26px;background:rgba(38,38,38,0.88);border-radius:2px"></div>
<span class="a" style="left:189px;top:338px;font-size:8.5px;color:#ececec;white-space:nowrap">⊢ : 10.417 in</span>
<span class="a" style="left:189px;top:348px;font-size:8.5px;color:#ececec;white-space:nowrap">⊤ :&nbsp;&nbsp;&nbsp;5.556 in</span>
<svg style="left:169px;top:371px" width="10" height="12"><path d="M1 1v9l2.5-2.5 2 4 1.5-0.7-2-4h3.5z" fill="#f4f4f4" stroke="#333" stroke-width="0.8"/></svg>
</div>
<div class="a" id="vscroll"><div class="a" style="left:1px;top:190px;width:11px;height:217px;background:#5e5e5e"></div></div>
<div class="a" id="hscroll">
 <div class="a" style="left:196px;top:0;width:706px;height:15px;background:#4a4a4a"></div>
 <div class="a" style="left:371px;top:3px;width:288px;height:10px;background:#686868"></div>
 <span class="a" style="left:118px;top:2px;font-size:9px;color:#cfcfcf">/178.3M</span>
 <svg style="left:184px;top:3px" width="5" height="9"><path d="M0.5 0.5l4 4-4 4" stroke="#aaa" fill="none"/></svg>
 <svg style="left:201px;top:3px" width="5" height="9"><path d="M4.5 0.5l-4 4 4 4" stroke="#888" fill="none"/></svg>
 <svg style="left:884px;top:4px" width="5" height="8"><path d="M0.5 0.5l3 3.5-3 3.5" stroke="#888" fill="none"/></svg>
</div>
<div class="a" style="left:772px;top:204px;width:32px;height:45px;background:#4c4c4c;border-radius:2px;box-shadow:1px 1px 2px rgba(0,0,0,0.4)">
 <div class="a" style="left:0;top:0;width:32px;height:11px;background:#444"></div>
 <svg style="left:6px;top:3px" width="6" height="4"><path d="M0.5 0.5l1.5 1.5-1.5 1.5M3.5 0.5l1.5 1.5-1.5 1.5" stroke="#bbb" fill="none" stroke-width="0.8"/></svg>
 <svg style="left:21px;top:2px" width="7" height="7"><path d="M1 1l5 5M6 1l-5 5" stroke="#d8d8d8" stroke-width="1.1"/></svg>
 <svg style="left:8px;top:22px" width="15" height="16"><circle cx="5" cy="6" r="4" fill="none" stroke="#ccc" stroke-width="1.2"/><circle cx="5" cy="6" r="1.5" fill="#ccc"/><rect x="11" y="2" width="3" height="3" fill="#ddd"/><rect x="11" y="6" width="3" height="3" fill="#ddd"/><rect x="1" y="12" width="13" height="3" fill="#e8e8e8"/></svg>
</div>
<div class="a" id="narrow">
 <div class="a" style="left:0;top:0;width:34px;height:11px;background:#464646"></div>
 <svg style="left:22px;top:3px" width="8" height="5"><path d="M3 0.5l-2 2 2 2M6.5 0.5l-2 2 2 2" stroke="#bbb" fill="none"/></svg>
 <div class="a" style="left:1px;top:11px;width:33px;height:68px;background:#535353;border-left:2px solid #484848"></div>
 <div class="a" style="left:4px;top:44px;width:28px;height:1px;background:#474747"></div>
 <div class="a" style="left:1px;top:79px;width:33px;height:2px;background:#474747"></div>
 <svg style="left:10px;top:22px" width="18" height="17"><rect x="0.5" y="0.5" width="5" height="5" fill="none" stroke="#e0e0e0"/><rect x="0.5" y="6.5" width="5" height="4" fill="none" stroke="#e0e0e0"/><rect x="0" y="11" width="6" height="5" fill="#e0e0e0"/><path d="M9 3.5l2-1.5v3zM10.5 3c3 0 4 4 3 7-0.5 2-1.5 3-3 4" fill="none" stroke="#e0e0e0" stroke-width="1.3"/></svg>
 <svg style="left:9px;top:56px" width="17" height="15"><path d="M0.5 2.5h5l1.5 1.5h9.5v10h-16z" fill="none" stroke="#d8d8d8" stroke-width="1"/><path d="M4 12V9l1.5-1.5L7 9v3M8.5 12V9l1.5-1.5L11.5 9v3" fill="#d8d8d8" stroke="#d8d8d8"/></svg>
 <div class="a" style="left:1px;top:81px;width:33px;height:557px;background:#535353;border-left:2px solid #484848"></div>
</div>
<div class="a" id="right">
 <div class="a" style="left:0;top:0;width:310px;height:10px;background:#464646"></div>
 <svg style="left:296px;top:3px" width="8" height="5"><path d="M0.5 0.5l2 2-2 2M4 0.5l2 2-2 2" stroke="#bbb" fill="none"/></svg>
 <div class="a" style="left:0;top:10px;width:310px;height:24px;background:#494949"></div>
 <div class="a" style="left:2px;top:10px;width:32px;height:24px;background:#535353"></div>
 <div class="a" style="left:36px;top:10px;width:50px;height:24px;background:#4b4b4b"></div>
 <span class="a" style="left:8px;top:17px;font-size:9px;font-weight:bold;color:#f2f2f2">Color</span>
 <span class="a" style="left:43px;top:17px;font-size:9px;color:#b4b4b4">Swatches</span>
 <svg style="left:297px;top:18px" width="9" height="8"><path d="M0 1.5h9M0 4h9M0 6.5h9" stroke="#aaa"/></svg>
 <div class="a" style="left:2px;top:34px;width:306px;height:113px;background:#535353"></div>
 <div class="a" style="left:7px;top:42px;width:19px;height:18px;background:#f0d6d2;border:1.5px solid #8a8a8a"></div>
 <div class="a" style="left:18px;top:52px;width:15px;height:15px;background:#ff6a10;border:1px solid #dcdcdc;z-index:0"></div>
 <div class="a" style="left:8px;top:43px;width:17px;height:16px;background:#ecd4d0;z-index:1"></div>
 <div class="a" style="left:38px;top:40px;width:228px;height:99px;background:linear-gradient(to bottom,rgba(0,0,0,0),#000),linear-gradient(to right,#fff,#ff2a10)"></div>
 <svg style="left:64px;top:41px" width="10" height="10"><circle cx="5" cy="5" r="4" fill="none" stroke="#333" stroke-width="1.2"/></svg>
 <div class="a" style="left:280px;top:40px;width:15px;height:99px;background:linear-gradient(to bottom,#ff0000 0%,#ff00ff 17%,#0000ff 33%,#00ffff 50%,#00ff00 67%,#ffff00 83%,#ff0000 100%)"></div>
 <svg style="left:273px;top:134px" width="6" height="7"><path d="M0.5 0.5l5 3-5 3z" fill="#e8e8e8"/></svg>
 <div class="a" style="left:2px;top:147px;width:306px;height:9px;background:#535353"></div><div class="a" style="left:0;top:156px;width:310px;height:2px;background:#454545"></div>
 <div class="a" style="left:0;top:158px;width:310px;height:23px;background:#494949"></div>
 <div class="a" style="left:3px;top:158px;width:60px;height:23px;background:#4b4b4b"></div>
 <div class="a" style="left:65px;top:158px;width:38px;height:23px;background:#535353"></div>
 <div class="a" style="left:106px;top:158px;width:50px;height:23px;background:#4b4b4b"></div>
 <div class="a" style="left:158px;top:158px;width:32px;height:23px;background:#4b4b4b"></div>
 <span class="a" style="left:8px;top:165px;font-size:9.2px;color:#b4b4b4">Adjustments</span>
 <span class="a" style="left:73px;top:165px;font-size:9.2px;font-weight:bold;color:#f2f2f2">Layers</span>
 <span class="a" style="left:112px;top:165px;font-size:9.2px;color:#b4b4b4">Channels</span>
 <span class="a" style="left:161px;top:165px;font-size:9.2px;color:#b4b4b4">Paths</span>
 <svg style="left:297px;top:166px" width="9" height="8"><path d="M0 1.5h9M0 4h9M0 6.5h9" stroke="#aaa"/></svg>
 <div class="a" style="left:2px;top:181px;width:306px;height:457px;background:#535353"></div>
 <div class="a" style="left:5px;top:188px;width:70px;height:18px;background:#4a4a4a"></div>
 <svg style="left:9px;top:192px" width="10" height="10"><circle cx="4" cy="4" r="3" fill="none" stroke="#ddd" stroke-width="1.2"/><path d="M6.2 6.2l3 3" stroke="#ddd" stroke-width="1.3"/></svg>
 <span class="a" style="left:21px;top:192px;font-size:8.5px;color:#d8d8d8">Kind</span>
 <svg style="left:64px;top:196px" width="8" height="5"><path d="M1 1l3 3 3-3" stroke="#999" fill="none"/></svg>
 <svg style="left:86px;top:190px" width="100" height="14" fill="none" stroke="#cfcfcf" stroke-width="1.1">
  <rect x="0.5" y="1.5" width="10" height="9"/><path d="M2 9l2.5-3 2 2 1.5-1.5 2 2.5" />
  <circle cx="25" cy="6" r="4.5"/><path d="M21.8 9.2A4.5 4.5 0 0 1 28.2 2.8z" fill="#cfcfcf"/>
  <path d="M40 2h9M44.5 2v9M43 11h3" stroke-width="1.3"/>
  <rect x="61.5" y="2.5" width="8" height="8"/><path d="M60 2.5h3M60 10.5h3M68 2.5h3M68 10.5h3"/>
  <path d="M81 6.5h8v5h-8zM82.5 6.5V4a2.5 2.5 0 0 1 5 0" />
 </svg>
 <svg style="left:186px;top:190px" width="10" height="10"><circle cx="4" cy="4" r="3.5" fill="#e8e8e8"/></svg>
 <div class="a" style="left:5px;top:213px;width:105px;height:15px;background:#4a4a4a"></div>
 <span class="a" style="left:10px;top:216px;font-size:8.5px;color:#d8d8d8">Normal</span>
 <svg style="left:101px;top:219px" width="7" height="4"><path d="M0.5 0.5l3 3 3-3" stroke="#999" fill="none"/></svg>
 <span class="a" style="left:117px;top:217px;font-size:8.5px;color:#c4c4c4">Opacity:</span>
 <div class="a" style="left:152px;top:212px;width:28px;height:15px;background:#474747"></div>
 <span class="a" style="left:154px;top:215px;font-size:8.5px;color:#d8d8d8">100%</span>
 <div class="a" style="left:181px;top:212px;width:10px;height:15px;background:#4a4a4a"></div>
 <svg style="left:183px;top:219px" width="7" height="4"><path d="M0.5 0.5l3 3 3-3" stroke="#999" fill="none"/></svg>
 <div class="a" style="left:4px;top:231px;width:300px;height:1px;background:#4a4a4a"></div><div class="a" style="left:4px;top:206px;width:300px;height:1px;background:#4a4a4a"></div>
 <span class="a" style="left:5px;top:240px;font-size:8.5px;color:#bdbdbd">Lock:</span>
 <svg style="left:32px;top:237px" width="120" height="14" fill="none" stroke="#d8d8d8" stroke-width="1.1">
  <rect x="0.5" y="1.5" width="9" height="9" fill="#d8d8d8" stroke="none"/><rect x="2" y="3" width="2" height="2" fill="#535353" stroke="none"/><rect x="6" y="3" width="2" height="2" fill="#535353" stroke="none"/><rect x="4" y="5" width="2" height="2" fill="#535353" stroke="none"/><rect x="2" y="7" width="2" height="2" fill="#535353" stroke="none"/><rect x="6" y="7" width="2" height="2" fill="#535353" stroke="none"/>
  <path d="M20 12l2-3 6-7.5 0.8 0.8-6 7.5z" fill="#d8d8d8"/>
  <path d="M40 1v11M34.5 6.5h11"/><path d="M40 0.5l-2 2h4zM40 12.5l-2-2h4zM34 6.5l2-2v4zM46 6.5l-2-2v4z" fill="#d8d8d8" stroke="none"/>
  <path d="M54 3h9v8M56 1v8h9"/>
  <rect x="73" y="6" width="8" height="6" fill="#d8d8d8" stroke="none"/><path d="M74.5 6V4a2.5 2.5 0 0 1 5 0v2"/>
 </svg>
 <span class="a" style="left:135px;top:240px;font-size:8.5px;color:#bdbdbd">Fill:</span>
 <div class="a" style="left:152px;top:235px;width:28px;height:15px;background:#474747"></div>
 <span class="a" style="left:154px;top:238px;font-size:8.5px;color:#d8d8d8">100%</span>
 <div class="a" style="left:181px;top:235px;width:10px;height:15px;background:#4a4a4a"></div>
 <svg style="left:183px;top:242px" width="7" height="4"><path d="M0.5 0.5l3 3 3-3" stroke="#999" fill="none"/></svg>
 <div class="a" style="left:2px;top:255px;width:306px;height:1px;background:#4a4a4a"></div>
 <div class="a" style="left:0;top:257px;width:298px;height:360px;overflow:hidden" id="layers">
 <div class="lay" style="top:0.0px;background:linear-gradient(to right,#535353 0,#535353 25px,#696969 25px)"><svg class="eye" width="12" height="8"><path d="M0.5 4C2.8 0.3 9.2 0.3 11.5 4 9.2 7.7 2.8 7.7 0.5 4z" fill="#e8e8e8"/><circle cx="6" cy="4" r="2" fill="#535353"/><circle cx="6" cy="4" r="1" fill="#444"/></svg><div class="th" style="outline:1.5px solid #e8e8e8;outline-offset:1px;"></div><span class="nm">Layer 10 copy</span></div>
 <div class="lay" style="top:34.2px;background:#535353"><svg class="eye" width="12" height="8"><path d="M0.5 4C2.8 0.3 9.2 0.3 11.5 4 9.2 7.7 2.8 7.7 0.5 4z" fill="#e8e8e8"/><circle cx="6" cy="4" r="2" fill="#535353"/><circle cx="6" cy="4" r="1" fill="#444"/></svg><div class="th" style=""></div><span class="nm">Layer 10</span></div>
 <div class="lay" style="top:68.4px;background:#535353"><svg class="eye" width="12" height="8"><path d="M0.5 4C2.8 0.3 9.2 0.3 11.5 4 9.2 7.7 2.8 7.7 0.5 4z" fill="#e8e8e8"/><circle cx="6" cy="4" r="2" fill="#535353"/><circle cx="6" cy="4" r="1" fill="#444"/></svg><div class="th" style=""></div><span class="nm">Layer 9 copy 3</span></div>
 <div class="lay" style="top:102.6px;background:#535353"><svg class="eye" width="12" height="8"><path d="M0.5 4C2.8 0.3 9.2 0.3 11.5 4 9.2 7.7 2.8 7.7 0.5 4z" fill="#e8e8e8"/><circle cx="6" cy="4" r="2" fill="#535353"/><circle cx="6" cy="4" r="1" fill="#444"/></svg><div class="th" style=""></div><span class="nm">Layer 9 copy 2</span></div>
 <div class="lay" style="top:136.8px;background:#535353"><svg class="eye" width="12" height="8"><path d="M0.5 4C2.8 0.3 9.2 0.3 11.5 4 9.2 7.7 2.8 7.7 0.5 4z" fill="#e8e8e8"/><circle cx="6" cy="4" r="2" fill="#535353"/><circle cx="6" cy="4" r="1" fill="#444"/></svg><div class="th" style=""></div><span class="nm">Layer 9 copy</span></div>
 <div class="lay" style="top:171.0px;background:#535353"><svg class="eye" width="12" height="8"><path d="M0.5 4C2.8 0.3 9.2 0.3 11.5 4 9.2 7.7 2.8 7.7 0.5 4z" fill="#e8e8e8"/><circle cx="6" cy="4" r="2" fill="#535353"/><circle cx="6" cy="4" r="1" fill="#444"/></svg><div class="th" style=""></div><span class="nm">Layer 9</span></div>
 <div class="lay" style="top:205.2px;background:#535353"><div class="th" style=""></div><span class="nm">Layer 7</span></div>
 <div class="lay" style="top:239.4px;background:#535353"><svg class="eye" width="12" height="8"><path d="M0.5 4C2.8 0.3 9.2 0.3 11.5 4 9.2 7.7 2.8 7.7 0.5 4z" fill="#e8e8e8"/><circle cx="6" cy="4" r="2" fill="#535353"/><circle cx="6" cy="4" r="1" fill="#444"/></svg><div class="th" style=""></div><span class="nm">Layer 8 copy 6</span></div>
 <div class="lay" style="top:273.6px;background:#535353"><svg class="eye" width="12" height="8"><path d="M0.5 4C2.8 0.3 9.2 0.3 11.5 4 9.2 7.7 2.8 7.7 0.5 4z" fill="#e8e8e8"/><circle cx="6" cy="4" r="2" fill="#535353"/><circle cx="6" cy="4" r="1" fill="#444"/></svg><div class="th" style=""></div><span class="nm">Layer 8 copy 5</span></div>
 <div class="lay" style="top:307.8px;background:#535353"><svg class="eye" width="12" height="8"><path d="M0.5 4C2.8 0.3 9.2 0.3 11.5 4 9.2 7.7 2.8 7.7 0.5 4z" fill="#e8e8e8"/><circle cx="6" cy="4" r="2" fill="#535353"/><circle cx="6" cy="4" r="1" fill="#444"/></svg><div class="th" style=""></div><span class="nm">Layer 8 copy 4</span></div>
 <div class="lay" style="top:342.0px;background:#535353"><svg class="eye" width="12" height="8"><path d="M0.5 4C2.8 0.3 9.2 0.3 11.5 4 9.2 7.7 2.8 7.7 0.5 4z" fill="#e8e8e8"/><circle cx="6" cy="4" r="2" fill="#535353"/><circle cx="6" cy="4" r="1" fill="#444"/></svg><div class="th" style=""></div><span class="nm">Layer 8 copy 2</span></div>

 </div>
 <div class="a" style="left:298px;top:257px;width:10px;height:360px;background:#4b4b4b"></div>
 <div class="a" style="left:299px;top:272px;width:9px;height:133px;background:#666"></div>
 <svg style="left:299px;top:262px" width="8" height="6"><path d="M1 5l3-3 3 3" stroke="#888" fill="none"/></svg>
 <svg style="left:299px;top:604px" width="8" height="6"><path d="M1 1l3 3 3-3" stroke="#888" fill="none"/></svg>
 <svg style="left:139px;top:621px" width="160" height="14" fill="none" stroke="#d8d8d8" stroke-width="1.1">
  <path d="M3 4h-2v5h2M9 4h2v5h-2M3 6.5h6" stroke="#8c8c8c"/>
  <text x="22" y="11" font-family="Liberation Serif" font-style="italic" font-size="12" fill="#d8d8d8" stroke="none">fx</text><rect x="32" y="11" width="1.5" height="1.5" fill="#d8d8d8" stroke="none"/>
  <rect x="46" y="2" width="12" height="9" fill="#d8d8d8" stroke="none"/><circle cx="52" cy="6.5" r="2.7" fill="#535353" stroke="none"/>
  <circle cx="73" cy="6.5" r="4.8"/><path d="M69.6 9.9A4.8 4.8 0 0 1 76.4 3.1z" fill="#d8d8d8"/><rect x="78" y="11" width="1.5" height="1.5" fill="#d8d8d8" stroke="none"/>
  <path d="M90 3h4l1 1h6v8h-11z" fill="#d8d8d8" stroke="none"/>
  <rect x="112.5" y="2.5" width="9" height="9"/><path d="M114 7h5M117 5l2 2-2 2"/>
  <path d="M133 3h10M136 3V1.5h4V3M134 4v8h8V4M136.5 5.5v5M139.5 5.5v5"/>
 </svg>
</div>
<div class="a" style="left:969px;top:80px;width:2px;height:628px;background:#464646"></div>
<div class="a" style="left:935px;top:95px;width:2px;height:613px;background:#464646"></div>
<div class="a" id="taskbar">
 <div class="a" style="left:150px;top:1px;width:176px;height:11px;background:#f2f2f2"></div>
 <svg style="left:338px;top:7px" width="16" height="5"><path d="M2 5A6 6 0 0 1 14 5" fill="none" stroke="#ddd" stroke-width="1.5"/></svg>
 <div class="a" style="left:384px;top:8px;width:2px;height:4px;background:#ddd"></div><div class="a" style="left:390px;top:6px;width:2px;height:6px;background:#ddd"></div><div class="a" style="left:396px;top:8px;width:2px;height:4px;background:#ddd"></div>
 <div class="a" style="left:423px;top:7px;width:14px;height:10px;border-radius:7px 7px 0 0;background:#1e90e0"></div>
 <div class="a" style="left:461px;top:8px;width:18px;height:6px;background:#f0b830"></div>
 <svg style="left:503px;top:4px" width="12" height="8"><circle cx="6" cy="4" r="3" fill="none" stroke="#ddd" stroke-width="1.5"/></svg>
 <svg style="left:545px;top:6px" width="18" height="6"><path d="M1 6L9 0L17 6z" fill="#f4f4f4"/></svg>
 <div class="a" style="left:589px;top:8px;width:15px;height:4px;background:#3a9ae8"></div>
 <div class="a" style="left:628px;top:7px;width:17px;height:10px;border-radius:9px 9px 0 0;background:#e04040"></div>
 <svg style="left:669px;top:6px" width="16" height="6"><path d="M1 6A7 7 0 0 1 15 6" fill="none" stroke="#eee" stroke-width="2.5"/></svg>
 <div class="a" style="left:710px;top:8px;width:18px;height:6px;border:1.5px solid #e060e0;border-bottom:none;background:#2a0a40"></div>
 <div class="a" style="left:751px;top:8px;width:18px;height:6px;border:1.5px solid #9a90ff;border-bottom:none;background:#1a0a50"></div>
 <div class="a" style="left:792px;top:8px;width:18px;height:6px;border:1.5px solid #ff9a00;border-bottom:none;background:#3a1000"></div>
 <div class="a" style="left:823px;top:0;width:40px;height:12px;background:#3e4e62"></div>
 <div class="a" style="left:833px;top:8px;width:18px;height:6px;border:1.5px solid #31a8ff;border-bottom:none;background:#001e36"></div>
 <svg style="left:876px;top:7px" width="18" height="6"><path d="M2 6A7 7 0 0 1 16 6" fill="none" stroke="#ccc" stroke-width="1.5"/></svg>
 <div class="a" style="left:1147px;top:10px;width:3px;height:2px;background:#ccc"></div>
 <div class="a" style="left:1168px;top:9px;width:3px;height:3px;background:#ccc"></div>
 <span class="a" style="left:1190px;top:4px;font-size:9.5px;color:#ececec">8:04 AM</span>
 <div class="a" style="left:1246px;top:10px;width:14px;height:2px;background:#f0f0f0"></div>
 <div class="a" style="left:1275px;top:0;width:1px;height:12px;background:#5a6a80"></div>
</div>
<div class="a" id="cam">
<svg style="left:0;top:0" width="150" height="160" viewBox="0 561 150 160">
 <defs><filter id="cb" x="-20%" y="-20%" width="140%" height="140%"><feGaussianBlur stdDeviation="1.2"/></filter>
 <filter id="cb1"><feGaussianBlur stdDeviation="0.7"/></filter>
 <linearGradient id="cbg" x1="0" y1="0" x2="1" y2="0"><stop offset="0" stop-color="#cfcfcf"/><stop offset="0.35" stop-color="#dedede"/><stop offset="1" stop-color="#d6d6d6"/></linearGradient>
 <linearGradient id="face" x1="0" y1="0" x2="1" y2="0"><stop offset="0" stop-color="#a8a8a8"/><stop offset="0.4" stop-color="#c8c8c8"/><stop offset="1" stop-color="#9a9a9a"/></linearGradient></defs>
 <rect x="0" y="561" width="150" height="160" fill="url(#cbg)"/>
 <rect x="134" y="581" width="16" height="24" fill="#1e1e1e" filter="url(#cb1)"/>
 <rect x="130" y="655" width="20" height="12" fill="#2a2a2a" filter="url(#cb1)"/>
 <ellipse cx="141" cy="648" rx="5" ry="8" fill="#4a4a4a" filter="url(#cb1)"/>
 <g filter="url(#cb)">
 <path d="M57 612Q58 598 80 596Q110 592 132 600Q136 640 128 662Q118 685 100 688Q80 688 68 672Q58 650 57 612z" fill="url(#face)"/>
 <path d="M0 695Q25 660 62 645Q70 672 92 690Q112 690 128 662Q140 670 150 688V720H0z" fill="#121212"/>
 <path d="M54 604Q52 572 82 563Q116 557 134 578Q138 592 134 604Q120 588 100 590Q76 594 64 606Q62 620 60 626Q54 618 54 604z" fill="#2e2e2e"/><path d="M70 575Q95 565 120 575" stroke="#555" stroke-width="3" fill="none"/>
 <path d="M76 660Q92 655 112 660Q115 682 98 692Q82 690 76 660z" fill="#5a5a5a"/>
 </g>
 <path d="M66 628Q76 622 88 630M102 630Q113 621 124 626" stroke="#2a2a2a" stroke-width="3" fill="none" filter="url(#cb1)"/>
 <ellipse cx="79" cy="636" rx="5" ry="2.5" fill="#1a1a1a" filter="url(#cb1)"/><ellipse cx="112" cy="634" rx="5" ry="2.5" fill="#1a1a1a" filter="url(#cb1)"/>
 <path d="M97 638L99 658" stroke="#cfcfcf" stroke-width="5" filter="url(#cb)"/>
</svg>
</div>
</body></html>
